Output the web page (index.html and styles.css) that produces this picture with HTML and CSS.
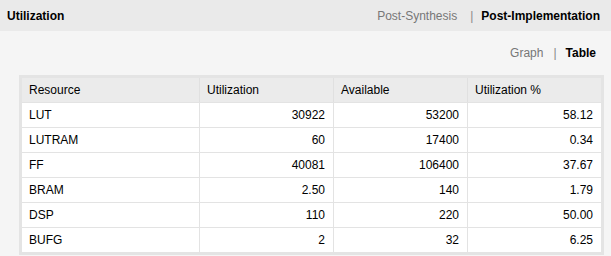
FILE: index.html
```html
<!DOCTYPE html>
<html>
<head>
<meta charset="utf-8">
<link rel="stylesheet" href="styles.css">
</head>
<body>
<div class="header">
  <div class="title">Utilization</div>
  <div class="nav">
    <span class="link">Post-Synthesis</span>
    <span class="sep">|</span>
    <span class="link active">Post-Implementation</span>
  </div>
</div>
<div class="subbar">
  <span class="link">Graph</span>
  <span class="sep">|</span>
  <span class="link active">Table</span>
</div>
<div class="frame">
  <table class="grid">
    <colgroup>
      <col class="c1"><col class="c2"><col class="c3"><col class="c4">
    </colgroup>
    <thead>
      <tr><th>Resource</th><th>Utilization</th><th>Available</th><th>Utilization %</th></tr>
    </thead>
    <tbody>
      <tr><td>LUT</td><td class="num">30922</td><td class="num">53200</td><td class="num">58.12</td></tr>
      <tr><td>LUTRAM</td><td class="num">60</td><td class="num">17400</td><td class="num">0.34</td></tr>
      <tr><td>FF</td><td class="num">40081</td><td class="num">106400</td><td class="num">37.67</td></tr>
      <tr><td>BRAM</td><td class="num">2.50</td><td class="num">140</td><td class="num">1.79</td></tr>
      <tr><td>DSP</td><td class="num">110</td><td class="num">220</td><td class="num">50.00</td></tr>
      <tr><td>BUFG</td><td class="num">2</td><td class="num">32</td><td class="num">6.25</td></tr>
    </tbody>
  </table>
</div>
</body>
</html>
```

FILE: styles.css
```css
html, body {
  margin: 0;
  padding: 0;
}
body {
  background: #f5f5f5;
  font-family: "Liberation Sans", Arial, sans-serif;
  font-size: 12px;
  color: #000;
}
.header {
  height: 31px;
  background: #eaeaea;
  display: flex;
  align-items: center;
  justify-content: space-between;
  padding: 0 11px 0 7px;
}
.title {
  font-weight: bold;
}
.nav, .subbar {
  display: flex;
  align-items: center;
}
.link {
  color: #777;
}
.link.active {
  color: #000;
  font-weight: bold;
}
.sep {
  color: #888;
  margin: 0 8px 0 13px;
}
.subbar {
  height: 44px;
  justify-content: flex-end;
  padding-right: 15px;
}
.subbar .sep {
  margin: 0 9px 0 10px;
}
.frame {
  margin: 0 7px 0 19px;
  background: #e4e4e4;
  padding: 3px;
}
.grid {
  width: 579px;
  table-layout: fixed;
  border-collapse: separate;
  border-spacing: 0;
}
.c1 { width: 177px; }
.c2, .c3 { width: 134px; }
.c4 { width: 134px; }
.grid th, .grid td {
  padding: 0 8px 0 7px;
  line-height: 24px;
  font-weight: normal;
  text-align: left;
  white-space: nowrap;
}
.grid th {
  background: #ebebeb;
}
.grid th + th {
  border-left: 1px solid #e0e0e0;
}
.grid td {
  background: #fff;
  border-top: 1px solid #e3e3e3;
}
.grid td + td {
  border-left: 1px solid #e3e3e3;
}
.grid td.num {
  text-align: right;
}
```
